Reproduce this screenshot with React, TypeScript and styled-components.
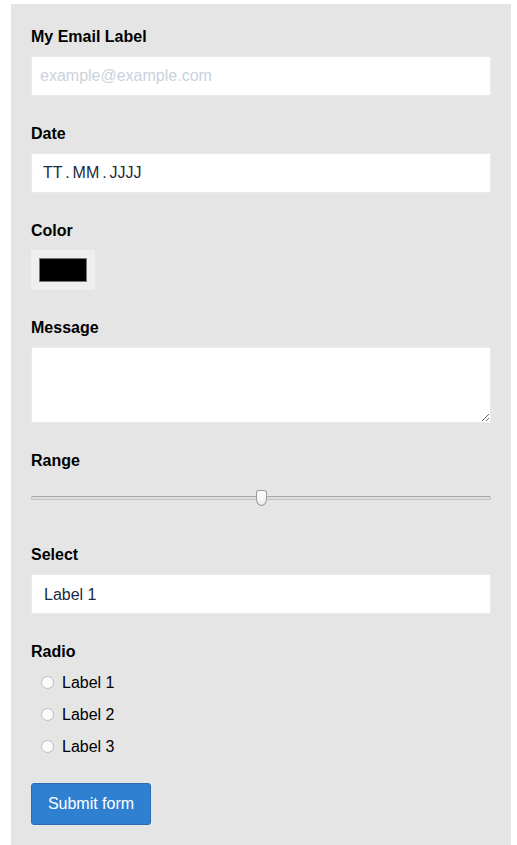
import React from "react";
import styled, { createGlobalStyle } from "styled-components";

const Global = createGlobalStyle`
  html, body { margin: 0; padding: 0; background: #ffffff; }
  body { font-family: "Liberation Sans", Arial, sans-serif; }
  * { box-sizing: border-box; }
`;

const Page = styled.div`
  padding: 4px 6px 0 11px;
`;

const Form = styled.form`
  width: 500px;
  background: #e5e5e5;
  padding: 20px 20px 40px 20px;
  display: flex;
  flex-direction: column;
`;

const Group = styled.div<{ $gap?: number }>`
  display: flex;
  flex-direction: column;
  margin-bottom: ${(p) => p.$gap ?? 25}px;
`;

const Label = styled.label`
  display: block;
  font-size: 16px;
  font-weight: bold;
  line-height: 24px;
  color: #000;
  padding-top: 1px;
  margin-bottom: 7px;
`;

const fieldBase = `
  width: 100%;
  height: 40px;
  border: 1px solid #e6ebf1;
  background: #ffffff;
  border-radius: 0;
  font-family: "Liberation Sans", Arial, sans-serif;
  font-size: 16px;
  color: #1c2a40;
  outline: none;
`;

const TextInput = styled.input<{ $indent?: number; $tight?: boolean }>`
  ${fieldBase}
  padding: 0 0 0 ${(p) => p.$indent ?? 8}px;
  word-spacing: ${(p) => (p.$tight ? "-1.5px" : "normal")};
  &::placeholder { color: #cad2dc; }
`;

const ColorInput = styled.input`
  appearance: none;
  -webkit-appearance: none;
  width: 64px;
  height: 40px;
  padding: 8px;
  border: none;
  border-radius: 2px;
  background: #f0efed;
  cursor: pointer;
  &::-webkit-color-swatch-wrapper { padding: 0; }
  &::-webkit-color-swatch { border: 1px solid #777; border-radius: 0; }
`;

const TextArea = styled.textarea`
  ${fieldBase}
  height: 76px;
  padding: 8px;
  resize: both;
  display: block;
`;

const Range = styled.input`
  appearance: none;
  -webkit-appearance: none;
  width: 100%;
  height: 35px;
  margin: 0 0 2px 0;
  background: transparent;
  &::-webkit-slider-runnable-track {
    height: 4px;
    background: #dcdcdc;
    border-top: 1px solid #a8a8a8;
    border-bottom: 1px solid #c4c4c4;
    border-left: 1px solid #b8b8b8;
    border-right: 1px solid #b8b8b8;
    border-radius: 2px;
  }
  &::-webkit-slider-thumb {
    -webkit-appearance: none;
    appearance: none;
    width: 11px;
    height: 16px;
    margin-top: -7px;
    background: linear-gradient(#ffffff, #ececec);
    border: 1px solid #9a9a9a;
    border-radius: 3px 3px 50% 50% / 3px 3px 45% 45%;
  }
`;

const Select = styled.select`
  ${fieldBase}
  appearance: none;
  -webkit-appearance: none;
  padding: 0 0 0 12px;
  color: #1c2a40;
`;

const RadioList = styled.div`
  display: flex;
  flex-direction: column;
  gap: 8px;
`;

const RadioOption = styled.label`
  display: flex;
  align-items: center;
  height: 24px;
  font-size: 16px;
  color: #000;
  padding-left: 10px;
`;

const RadioDot = styled.input`
  appearance: none;
  -webkit-appearance: none;
  width: 13px;
  height: 13px;
  margin: 0 8px 0 0;
  border-radius: 50%;
  border: 1px solid #bcbcbc;
  background: #fbfbfb;
  position: relative;
  top: -1px;
`;

const Submit = styled.button`
  align-self: flex-start;
  width: 120px;
  height: 42px;
  background: #2f80d1;
  border: 1px solid #2a6fb5;
  border-radius: 3px;
  color: #ffffff;
  font-family: "Liberation Sans", Arial, sans-serif;
  font-size: 16px;
  cursor: pointer;
`;

export default function App() {
  return (
    <>
      <Global />
      <Page>
        <Form onSubmit={(e) => e.preventDefault()}>
          <Group>
            <Label htmlFor="email">My Email Label</Label>
            <TextInput id="email" type="email" placeholder="example@example.com" />
          </Group>
          <Group>
            <Label htmlFor="date">Date</Label>
            <TextInput id="date" type="text" $indent={11} $tight defaultValue="TT . MM . JJJJ" />
          </Group>
          <Group>
            <Label htmlFor="color">Color</Label>
            <ColorInput id="color" type="color" defaultValue="#000000" />
          </Group>
          <Group>
            <Label htmlFor="message">Message</Label>
            <TextArea id="message" />
          </Group>
          <Group>
            <Label htmlFor="range">Range</Label>
            <Range id="range" type="range" min={0} max={100} defaultValue={50} />
          </Group>
          <Group>
            <Label htmlFor="select">Select</Label>
            <Select id="select" defaultValue="1">
              <option value="1">Label 1</option>
              <option value="2">Label 2</option>
              <option value="3">Label 3</option>
            </Select>
          </Group>
          <Group $gap={24}>
            <Label as="div">Radio</Label>
            <RadioList>
              {["Label 1", "Label 2", "Label 3"].map((l) => (
                <RadioOption key={l}>
                  <RadioDot type="radio" name="radio" value={l} />
                  {l}
                </RadioOption>
              ))}
            </RadioList>
          </Group>
          <Submit type="submit">Submit form</Submit>
        </Form>
      </Page>
    </>
  );
}
